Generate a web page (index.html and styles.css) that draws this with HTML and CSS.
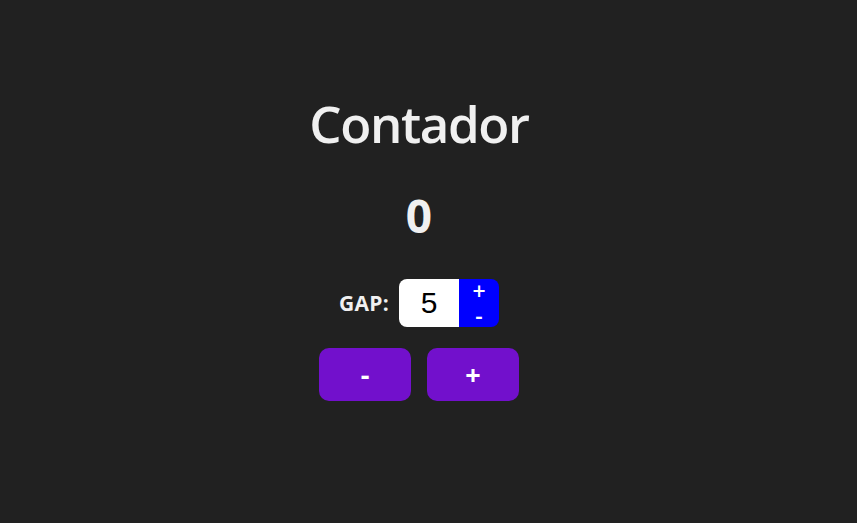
FILE: index.html
```html
<!DOCTYPE html>
<html lang="es">
<head>
<meta charset="utf-8">
<link rel="stylesheet" href="styles.css">
</head>
<body>
<main class="app">
  <h1 class="title">Contador</h1>
  <div class="count">0</div>
  <div class="gap-row">
    <label class="gap-label">GAP:</label>
    <div class="gap-control">
      <div class="gap-input">5</div>
      <div class="gap-steps">
        <button class="step">+</button>
        <button class="step">-</button>
      </div>
    </div>
  </div>
  <div class="actions">
    <button class="btn">-</button>
    <button class="btn">+</button>
  </div>
</main>
</body>
</html>
```
FILE: styles.css
```css
html, body {
  margin: 0;
  padding: 0;
  background: #212121;
  height: 100%;
}
body {
  font-family: "Open Sans", "Noto Sans", sans-serif;
  color: #f0f0f0;
}
.app {
  width: 838px;
  display: flex;
  flex-direction: column;
  align-items: center;
  padding-top: 88px;
}
.title {
  margin: 0;
  font-size: 51px;
  font-weight: 600;
  letter-spacing: -1.4px;
  line-height: 70px;
  color: #f0f0f0;
}
.count {
  margin-top: 32px;
  font-size: 46px;
  font-weight: 700;
  line-height: 50px;
}
.gap-row {
  margin-top: 39px;
  display: flex;
  align-items: center;
  gap: 10px;
}
.gap-label {
  font-size: 21px;
  font-weight: 700;
  letter-spacing: 0.3px;
}
.gap-control {
  display: flex;
  height: 48px;
  border-radius: 8px;
  overflow: hidden;
}
.gap-input {
  width: 60px;
  background: #ffffff;
  color: #000;
  font-family: "Liberation Sans", Arial, sans-serif;
  font-size: 30px;
  display: flex;
  align-items: center;
  justify-content: center;
}
.gap-steps {
  width: 40px;
  background: #0000ff;
  display: flex;
  flex-direction: column;
}
.step {
  height: 24px;
  border: 0;
  background: transparent;
  color: #fff;
  font-family: "Open Sans", sans-serif;
  font-size: 23px;
  font-weight: 600;
  padding: 0;
  line-height: 24px;
  display: flex;
  align-items: center;
  justify-content: center;
}
.actions {
  margin-top: 21px;
  display: flex;
  gap: 16px;
}
.btn {
  width: 92px;
  height: 53px;
  border: 0;
  border-radius: 10px;
  background: #7210cc;
  color: #fff;
  font-family: "Open Sans", sans-serif;
  font-size: 27px;
  font-weight: 700;
  padding: 0;
}
```
